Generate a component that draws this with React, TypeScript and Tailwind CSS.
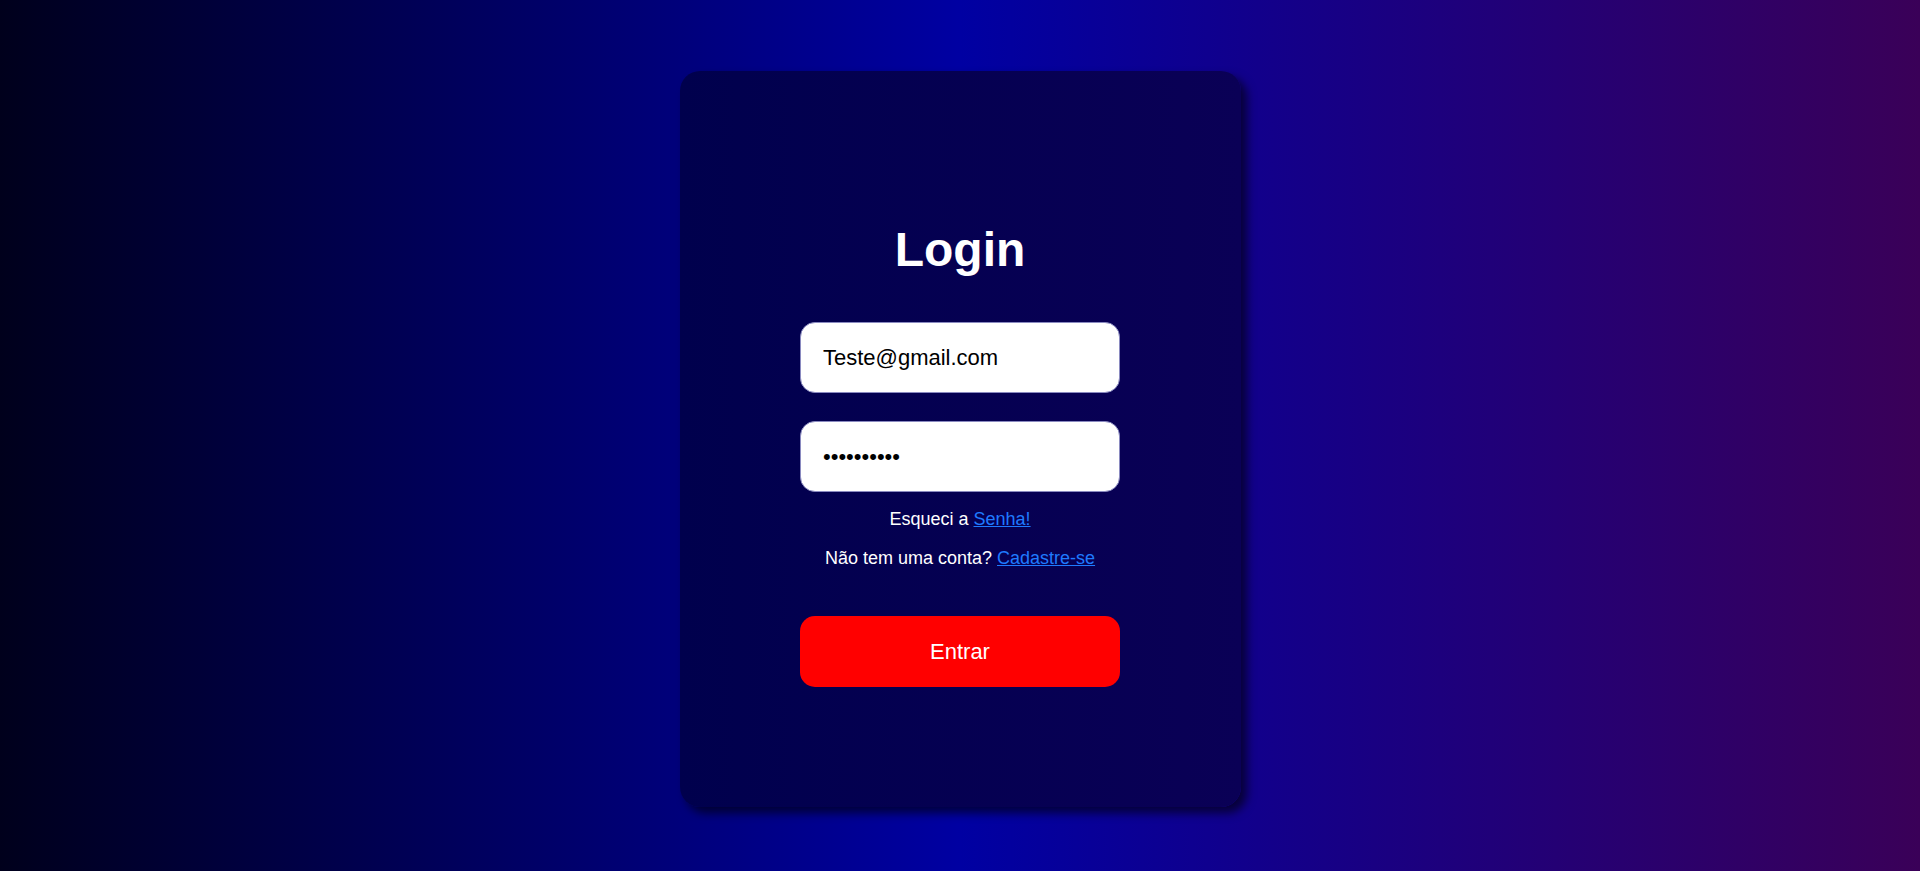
import React from 'react';

export default function App() {
  return (
    <div className="min-h-screen w-full bg-[linear-gradient(to_right,#00001c,#0000a2,#3a0058)] flex justify-center pt-[71px] font-['Liberation_Sans',Arial,sans-serif]">
      {/* Login card */}
      <div className="w-[561px] h-[736px] rounded-[20px] bg-[linear-gradient(to_right,#00004d,#0a0056)] shadow-[6px_6px_10px_rgba(0,0,0,0.6)] flex flex-col items-center pt-[151px]">
        <h1 className="text-[48px] leading-[55px] font-bold text-white">Login</h1>

        <form className="flex flex-col items-center mt-[45px]" onSubmit={(e) => e.preventDefault()}>
          <input
            type="email"
            readOnly
            value="Teste@gmail.com"
            className="w-[320px] h-[71px] rounded-[15px] bg-white border border-[#8a8ac0] px-[22px] text-[22px] text-black outline-none"
          />
          <input
            type="password"
            readOnly
            value="1234567890"
            className="w-[320px] h-[71px] rounded-[15px] bg-white border border-[#8a8ac0] px-[22px] text-[22px] text-black outline-none mt-[28px]"
          />

          <p className="text-[18px] leading-[21px] text-white mt-[17px]">
            Esqueci a <a href="#" className="text-[#1f7aff] underline">Senha!</a>
          </p>
          <p className="text-[18px] leading-[21px] text-white mt-[18px]">
            Não tem uma conta? <a href="#" className="text-[#1f7aff] underline">Cadastre-se</a>
          </p>

          <button
            type="submit"
            className="w-[320px] h-[71px] rounded-[15px] bg-[#ff0000] text-white text-[22px] mt-[47px]"
          >
            Entrar
          </button>
        </form>
      </div>
    </div>
  );
}
